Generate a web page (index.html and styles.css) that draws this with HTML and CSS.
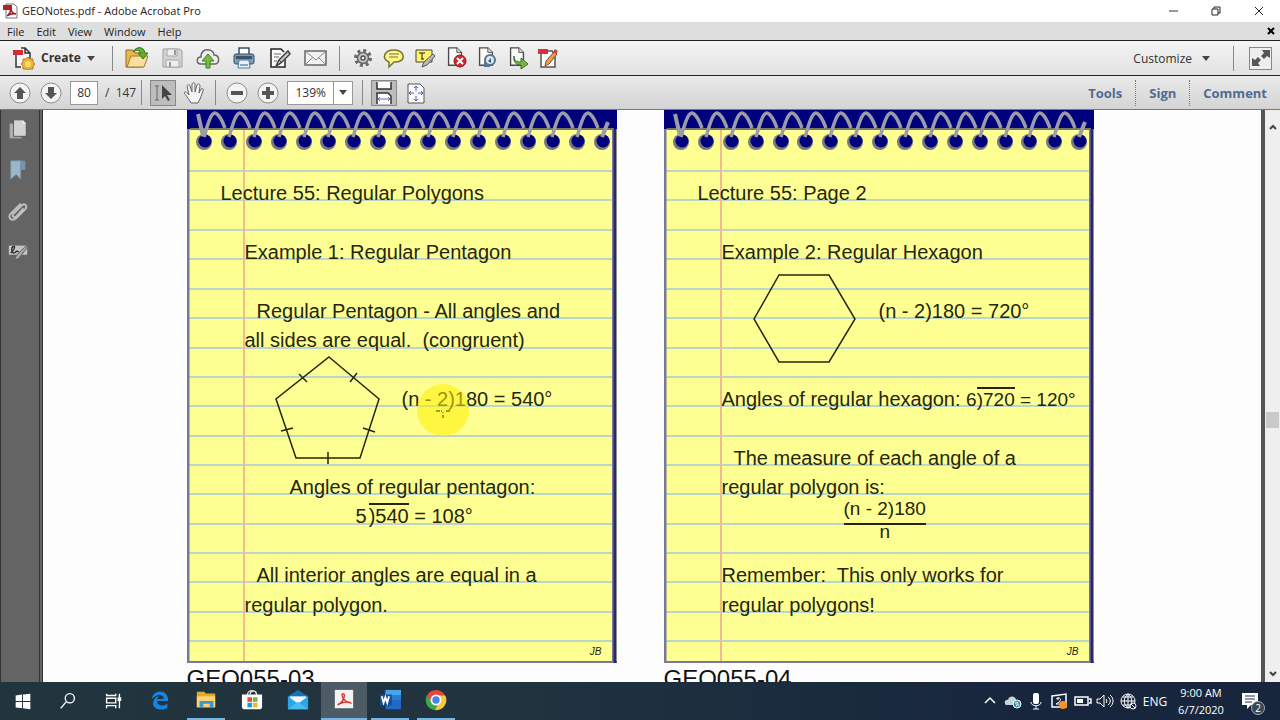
FILE: index.html
```html
<!DOCTYPE html>
<html lang="en">
<head>
<meta charset="utf-8">
<title>GEONotes.pdf - Adobe Acrobat Pro</title>
<link rel="stylesheet" href="styles.css">
</head>
<body>
<svg class="library" aria-hidden="true">
  <symbol id="page" viewBox="0 0 24 24"><path d="M5 2h9l5 5v14H5z" fill="#fbfbfb" stroke="#4b4b4b" stroke-width="1.5"/><path d="M14 2v5h5" fill="#ddd" stroke="#4b4b4b"/></symbol>
  <symbol id="hole" viewBox="0 0 18 18"><circle cx="9" cy="9" r="8" fill="#77777d"/><circle cx="10" cy="8" r="6.5" fill="#00007c"/></symbol>
  <symbol id="loop" viewBox="0 0 30 30"><path d="M3 27L6 17C10 4 13 1 16 4C20 7 22 13 24 18" fill="none" stroke="#9c9ca9" stroke-width="3.5"/></symbol>
  <symbol id="pad" viewBox="0 0 430 553">
    <path fill="#feff92" d="M0 0h430v553H0z"/>
    <path fill="#00007c" d="M0 0h430v19H0z"/>
    <path fill="#77776a" d="M3 18h424v2H3z"/>
    <path stroke="#b9d7c8" stroke-width="2" d="M2 61h425M2 90h425M2 120h425M2 149h425M2 179h425M2 208h425M2 238h425M2 267h425M2 296h425M2 326h425M2 355h425M2 384h425M2 414h425M2 443h425M2 472h425M2 502h425M2 531h425"/>
    <path stroke="#f0bc8c" stroke-width="2" d="M57 20v531"/>
    <path stroke="#78789a" stroke-width="3" d="M1 19v534"/>
    <path stroke="#7b789a" stroke-width="2" d="M0 552h430"/>
    <path stroke="#77779a" stroke-width="2" d="M426 20v532"/>
    <path stroke="#292771" stroke-width="3" d="M428 19v534"/>
    <g>
      <use href="#hole" x="8" y="23" width="18" height="18"/><use href="#hole" x="33" y="23" width="18" height="18"/><use href="#hole" x="58" y="23" width="18" height="18"/><use href="#hole" x="83" y="23" width="18" height="18"/><use href="#hole" x="108" y="23" width="18" height="18"/><use href="#hole" x="132" y="23" width="18" height="18"/><use href="#hole" x="157" y="23" width="18" height="18"/><use href="#hole" x="182" y="23" width="18" height="18"/><use href="#hole" x="207" y="23" width="18" height="18"/><use href="#hole" x="232" y="23" width="18" height="18"/><use href="#hole" x="257" y="23" width="18" height="18"/><use href="#hole" x="282" y="23" width="18" height="18"/><use href="#hole" x="307" y="23" width="18" height="18"/><use href="#hole" x="332" y="23" width="18" height="18"/><use href="#hole" x="356" y="23" width="18" height="18"/><use href="#hole" x="381" y="23" width="18" height="18"/><use href="#hole" x="406" y="23" width="18" height="18"/>
    </g>
    <g>
      <use href="#loop" x="14" y="0" width="30" height="30"/><use href="#loop" x="39" y="0" width="30" height="30"/><use href="#loop" x="64" y="0" width="30" height="30"/><use href="#loop" x="89" y="0" width="30" height="30"/><use href="#loop" x="114" y="0" width="30" height="30"/><use href="#loop" x="138" y="0" width="30" height="30"/><use href="#loop" x="163" y="0" width="30" height="30"/><use href="#loop" x="188" y="0" width="30" height="30"/><use href="#loop" x="213" y="0" width="30" height="30"/><use href="#loop" x="238" y="0" width="30" height="30"/><use href="#loop" x="263" y="0" width="30" height="30"/><use href="#loop" x="288" y="0" width="30" height="30"/><use href="#loop" x="313" y="0" width="30" height="30"/><use href="#loop" x="338" y="0" width="30" height="30"/><use href="#loop" x="362" y="0" width="30" height="30"/><use href="#loop" x="387" y="0" width="30" height="30"/>
      <path d="M11 4l5 22M421 12l-6 15" fill="none" stroke="#9c9ca9" stroke-width="4"/>
    </g>
  </symbol>
</svg>

<header class="titlebar">
  <svg class="app-icon" viewBox="0 0 16 16"><path d="M4 1h8l3 3v11H4z" fill="#fff" stroke="#777"/><path d="M1 2h9v5H1z" fill="#b5202b"/><path d="M5 13c4-3 4-6 4-9 0 5 2 7 5 7-4-1-6 0-9 2z" fill="none" stroke="#a81722" stroke-width="1.5"/></svg>
  <h1>GEONotes.pdf - Adobe Acrobat Pro</h1>
  <div class="window-buttons">
    <button aria-label="Minimize"><svg viewBox="0 0 12 12"><path d="M2 6h9" stroke="#333" fill="none"/></svg></button>
    <button aria-label="Restore"><svg viewBox="0 0 12 12"><path d="M2 4h6v6H2zM4 4V2h6v6H8" stroke="#222" fill="none"/></svg></button>
    <button aria-label="Close"><svg viewBox="0 0 12 12"><path d="M2 2l8 8M10 2l-8 8" stroke="#222" fill="none"/></svg></button>
  </div>
</header>

<nav class="menubar" aria-label="Menu">
  <button>File</button><button>Edit</button><button>View</button><button>Window</button><button>Help</button>
  <button class="close-doc" aria-label="Close document"><svg viewBox="0 0 8 8"><path d="M1 1l6 6M7 1L1 7" stroke="#000" stroke-width="2"/></svg></button>
</nav>

<div class="toolbar main-tools">
  <button class="create">
    <svg viewBox="0 0 24 24"><path d="M4 2h10l5 5v14H4z" fill="#f8f8f8"/><path d="M5 9v12h5M10 2h4l5 5v7M14 2v5h5" fill="none" stroke="#333" stroke-width="1.5"/><path d="M2 4h10v5H2z" fill="#d72b35"/><path d="M17 11l2 2 3 0 0 3 2 2-2 2 0 3-3 0-2 1-2-1-3 0 0-3-2-2 2-2 0-3 3 0z" fill="#efb437" stroke="#b47d20"/><circle cx="17" cy="18" r="3" fill="#ffd96c"/></svg>
    <span>Create</span><i class="caret"></i>
  </button>
  <i class="sep"></i>
  <div class="group wide">
    <button aria-label="Open"><svg viewBox="0 0 24 24"><path d="M2 7V4h7l2 3h8v14H2z" fill="#e9b84b" stroke="#8d6925"/><path d="M3 21l4-11h17l-4 11z" fill="#f7df9b" stroke="#a07a2c"/><path d="M9 6C12 0 20 0 21 7h3l-5 6-5-6h3c-1-3-5-3-8-1z" fill="#64ae2e" stroke="#397517"/></svg></button>
    <button aria-label="Save"><svg viewBox="0 0 24 24"><path d="M3 3h17l2 2v16H3z" fill="#d4d4d4" stroke="#a0a0a0"/><path d="M7 3h10v7H7zM6 14h13v7H6z" fill="#efefef" stroke="#a5a5a5"/><path d="M14 4h2v5h-2zM9 16h2v5H9z" fill="#999"/></svg></button>
    <button aria-label="Upload"><svg viewBox="0 0 24 24"><path d="M5 18C0 18 0 11 5 11 5 5 9 3 13 4c3 0 5 3 5 5 6 0 6 9 1 9z" fill="#eee" stroke="#666" stroke-width="1.5"/><path d="M12 8l6 7h-4v7h-4v-7H6z" fill="#79bd41" stroke="#3e7e20"/></svg></button>
    <button aria-label="Print"><svg viewBox="0 0 24 24"><path d="M7 9V2h10v7" fill="#fff" stroke="#35516a" stroke-width="1.5"/><rect x="2" y="8" width="20" height="10" rx="2" fill="#7f9bb3" stroke="#35516a"/><path d="M4 10h16v3H4z" fill="#3c556c"/><path d="M7 14h10l1 8H6z" fill="#e8f2f8" stroke="#55788f"/><path d="M8 19h8" stroke="#7cabc7" stroke-width="2"/></svg></button>
    <button aria-label="Edit"><svg viewBox="0 0 24 24"><path d="M17 13v8H3V3h10l3 3" fill="#fafafa" stroke="#222" stroke-width="1.5"/><path d="M6 8h7M6 11h5M6 15h3" stroke="#666"/><path d="M20 5l2 3-9 9-5 3 3-6z" fill="#ccc" stroke="#444" stroke-width="1.5"/><path d="M11 14l3 3" stroke="#333"/></svg></button>
    <button aria-label="Mail"><svg viewBox="0 0 24 24"><path d="M1 5h21v14H1z" fill="#f1f1f1" stroke="#666" stroke-width="1.5"/><path d="M1 5l11 9 10-9M1 19l8-8M22 19l-8-8" fill="none" stroke="#888"/></svg></button>
  </div>
  <i class="sep"></i>
  <div class="group tight">
    <button aria-label="Settings"><svg viewBox="0 0 24 24"><circle cx="12" cy="12" r="7.5" fill="none" stroke="#666" stroke-width="3" stroke-dasharray="3 2.89"/><circle cx="12" cy="12" r="5.5" fill="#c3c5c6" stroke="#666" stroke-width="1.5"/><circle cx="12" cy="12" r="2" fill="#eee" stroke="#555" stroke-width="1.5"/></svg></button>
    <button aria-label="Comment"><svg viewBox="0 0 24 24"><path d="M12 4c12 0 12 12 2 12h-2l-5 5v-5C-1 13 2 4 12 4z" fill="#fdf78a" stroke="#777338" stroke-width="1.5"/><path d="M7 8h10M7 11h9" stroke="#777338"/></svg></button>
    <button aria-label="Highlight"><svg viewBox="0 0 24 24"><path d="M3 4h16v12H3z" fill="#fff36b" stroke="#444"/><path d="M6 7h6M9 7v6M8 13h3" stroke="#222"/><path d="M20 8l2 2-8 9-5 2 2-5z" fill="#bbb" stroke="#555"/></svg></button>
    <button aria-label="Delete page"><svg viewBox="0 0 24 24"><use href="#page" width="22" height="22"/><circle cx="16" cy="15" r="6" fill="#cf292d" stroke="#8f161b"/><path d="M13 12l6 6M19 12l-6 6" stroke="#fff" stroke-width="2"/></svg></button>
    <button aria-label="Rotate page"><svg viewBox="0 0 24 24"><use href="#page" width="22" height="22"/><circle cx="15" cy="14" r="5" fill="#dde7ee" stroke="#55758e" stroke-width="2"/><path d="M13 15l3-3v5z" fill="#335f83"/><path d="M10 16v4h5" stroke="#557490" fill="none" stroke-width="2"/></svg></button>
    <button aria-label="Export page"><svg viewBox="0 0 24 24"><use href="#page" width="22" height="22"/><path d="M8 10c0 5 3 6 7 6v-4l7 6-7 5v-4c-5 0-8-3-7-9z" fill="#75b741" stroke="#376e20"/></svg></button>
    <button aria-label="Edit PDF"><svg viewBox="0 0 24 24"><path d="M4 5h11l3 4v12H4z" fill="#fff" stroke="#555" stroke-width="1.5"/><path d="M1 3h10v5H1z" fill="#dc3038"/><path d="M17 6l3 2-8 10-4 2 1-5z" fill="#e99d52" stroke="#82502b"/><path d="M18 3l3 2-2 3-3-2z" fill="#c34839"/></svg></button>
  </div>
  <div class="right-side">
    <button class="customize">Customize <i class="caret"></i></button>
    <i class="sep"></i>
    <button class="expand" aria-label="Full screen"><svg viewBox="0 0 22 22"><path d="M12 3h8v8l-3-2-3 3-3-3 3-3zM10 19H2v-8l3 2 3-3 3 3-3 3z" fill="#555"/></svg></button>
  </div>
</div>

<div class="toolbar page-tools">
  <div class="group arrows">
    <button aria-label="Previous page"><svg viewBox="0 0 24 24"><circle cx="12" cy="12" r="10" fill="#f4f4f4" stroke="#8c8c8c"/><path d="M12 6l6 6h-3v6H9v-6H6z" fill="#555"/></svg></button>
    <button aria-label="Next page"><svg viewBox="0 0 24 24"><circle cx="12" cy="12" r="10" fill="#f4f4f4" stroke="#8c8c8c"/><path d="M12 18l6-6h-3V6H9v6H6z" fill="#555"/></svg></button>
  </div>
  <label class="page-number"><input value="80" aria-label="Page number"><span>/&nbsp; 147</span></label>
  <i class="sep"></i>
  <div class="group pointer-tools">
    <button class="pressed" aria-label="Select"><svg viewBox="0 0 24 24"><path d="M4 5h4M6 5v14M4 19h4" stroke="#666" fill="none"/><path d="M11 4l10 10h-5l3 5-2 1-3-5-3 3z" fill="#444"/></svg></button>
    <button aria-label="Hand"><svg viewBox="0 0 24 24"><path d="M8 20C5 16 4 14 2 12c1-2 3-1 5 2L5 5c1-2 3-1 3 0l2 6V3c1-2 3-1 3 0v8l2-7c1-2 3-1 3 1l-1 7 2-4c2-1 3 0 2 2l-3 8-2 4H9z" fill="#f4f4f4" stroke="#666"/></svg></button>
  </div>
  <i class="sep"></i>
  <div class="group zoomers">
    <button aria-label="Zoom out"><svg viewBox="0 0 24 24"><circle cx="12" cy="12" r="10" fill="#f4f4f4" stroke="#8c8c8c"/><path d="M6 12h12" stroke="#555" stroke-width="4"/></svg></button>
    <button aria-label="Zoom in"><svg viewBox="0 0 24 24"><circle cx="12" cy="12" r="10" fill="#f4f4f4" stroke="#8c8c8c"/><path d="M6 12h12M12 6v12" stroke="#555" stroke-width="4"/></svg></button>
  </div>
  <div class="zoom-box"><input value="139%" aria-label="Zoom"><button aria-label="Zoom levels"><i class="caret"></i></button></div>
  <i class="sep"></i>
  <div class="group fits">
    <button class="pressed" aria-label="Scrolling pages"><svg viewBox="0 0 24 24"><path d="M5 1v7h14V1" fill="#fff" stroke="#333" stroke-width="1.5"/><path d="M5 23V12h11l3 3v8" fill="#fff" stroke="#333" stroke-width="1.5"/><path d="M6 18h12M8 16l-2 2 2 2M16 16l2 2-2 2" fill="none" stroke="#5b6ca8"/></svg></button>
    <button aria-label="Fit page"><svg viewBox="0 0 24 24"><path d="M4 3h12l4 4v15H4z" fill="#fafaff" stroke="#555"/><path d="M12 5v5M12 15v5M5 12h5M14 12h5M10 7l2-2 2 2M10 18l2 2 2-2M7 10l-2 2 2 2M17 10l2 2-2 2" fill="none" stroke="#5062a3"/></svg></button>
  </div>
  <nav class="panes" aria-label="Panes"><button>Tools</button><button>Sign</button><button>Comment</button></nav>
</div>

<div class="workspace">
  <aside class="sidebar">
    <button aria-label="Page thumbnails"><svg viewBox="0 0 24 24"><path d="M3 6h13v16H3z" fill="#b5b5b5" stroke="#888"/><path d="M7 2h10l4 4v14H7z" fill="#d3d3d3" stroke="#505050"/><path d="M17 2v4h4" fill="#eee"/></svg></button>
    <button aria-label="Bookmarks"><svg viewBox="0 0 24 24"><path d="M11 2h9v10h-5V6h-4z" fill="#7894ac"/><path d="M4 2h11v20l-5-5-6 5z" fill="#9db7ca" stroke="#728da3"/></svg></button>
    <button aria-label="Attachments"><svg viewBox="0 0 24 24"><path d="M18 9l-8 9c-2 2-5 0-3-3l9-9c3-3 7 0 4 4L10 20c-5 4-10-1-6-5L15 4" fill="none" stroke="#c0c0c0" stroke-width="2"/></svg></button>
    <button aria-label="Signatures"><svg viewBox="0 0 24 24"><path d="M2 5h20v10H2z" fill="#c4c4c4"/><path d="M4 13c3-2 6-8 3-7s-2 8 1 7l3-2 2 1" fill="none" stroke="#333" stroke-width="1.5"/><path d="M21 5l1 2-9 12-5 2 2-5z" fill="#aaa" stroke="#555"/></svg></button>
  </aside>
  <main class="document">
    <article class="leaf">
      <div class="sheet">
        <svg class="paper" viewBox="0 0 430 553"><use href="#pad"/>
          <g fill="none" stroke="#26260e" stroke-width="1.5"><path d="M142 247l50 42-19 59h-64l-20-59z"/><path d="M112 264l8 8M163 272l7-9M94 321l12-3M176 318l12 4M141 342v12"/></g>
        </svg>
        <div class="lines">
          <h2 class="r1">Lecture 55: Regular Polygons</h2>
          <p class="r3">Example 1: Regular Pentagon</p>
          <p class="r5 indent">Regular Pentagon - All angles and</p>
          <p class="r6">all sides are equal.&nbsp; (congruent)</p>
          <p class="r8 beside">(n - 2)180 = 540°</p>
          <p class="r11 middle">Angles of regular pentagon:</p>
          <p class="r12 division">5<span class="dividend">)540</span> = 108°</p>
          <p class="r14 indent">All interior angles are equal in a</p>
          <p class="r15">regular polygon.</p>
        </div>
        <small class="initials">JB</small>
        <svg class="cursor" viewBox="0 0 52 52"><circle cx="26" cy="26" r="26" fill="#ffef00" opacity=".55"/><path d="M19 27h4M24 27h1M29 27h4M26 28v1M26 31v3" stroke="#45450c"/></svg>
      </div>
      <p class="caption">GEO055-03</p>
    </article>
    <article class="leaf">
      <div class="sheet">
        <svg class="paper" viewBox="0 0 430 553"><use href="#pad"/><path d="M115 165h50l26 44-26 43h-50l-25-43z" fill="none" stroke="#26260e" stroke-width="1.5"/></svg>
        <div class="lines">
          <h2 class="r1">Lecture 55: Page 2</h2>
          <p class="r3">Example 2: Regular Hexagon</p>
          <p class="r5 beside">(n - 2)180 = 720°</p>
          <p class="r8">Angles of regular hexagon: <span class="compact">6<span class="dividend">)720</span> = 120°</span></p>
          <p class="r10 indent">The measure of each angle of a</p>
          <p class="r11">regular polygon is:</p>
          <p class="fraction"><span>(n - 2)180</span><span>n</span></p>
          <p class="r14">Remember:&nbsp; This only works for</p>
          <p class="r15">regular polygons!</p>
        </div>
        <small class="initials">JB</small>
      </div>
      <p class="caption">GEO055-04</p>
    </article>
  </main>
  <div class="scrollbar" aria-hidden="true">
    <svg viewBox="0 0 10 8"><path d="M2 6l3-3 3 3" fill="none" stroke="#444" stroke-width="2"/></svg>
    <i class="thumb"></i>
    <svg viewBox="0 0 10 8"><path d="M2 2l3 3 3-3" fill="none" stroke="#444" stroke-width="2"/></svg>
  </div>
</div>

<footer class="taskbar">
  <div class="system">
    <button aria-label="Start"><svg viewBox="0 0 24 24"><path d="M4 6l7-1v7H4zM12 5l8-1v8h-8zM4 13h7v7l-7-1zM12 13h8v8l-8-1z" fill="#fff"/></svg></button>
    <button aria-label="Search"><svg viewBox="0 0 24 24"><circle cx="14" cy="9" r="5" fill="none" stroke="#fff" stroke-width="1.5"/><path d="M10 13l-6 7" stroke="#fff" stroke-width="1.5"/></svg></button>
    <button aria-label="Task view"><svg viewBox="0 0 24 24"><path d="M5 4v2h10V4M5 20v-3h10v3M5 9h10v5H5zM19 4v16" fill="none" stroke="#fff" stroke-width="1.5"/><path d="M17 8h4v4h-4z" fill="#fff"/></svg></button>
  </div>
  <div class="apps">
    <button aria-label="Edge"><svg viewBox="0 0 24 24"><path d="M3 11C4 0 21-1 21 13H9c0 6 7 6 11 3v5C11 25 2 20 5 13c1-3 3-5 6-5-1 1-2 2-2 3h7c0-7-9-5-13 0z" fill="#1683df"/></svg></button>
    <button class="open" aria-label="File Explorer"><svg viewBox="0 0 24 24"><path d="M2 3h8l2 2h10v15H2z" fill="#e5a82f"/><path d="M2 8h20v12H2z" fill="#fad374"/><path d="M5 20v-7h15v7h-4v-4H9v4z" fill="#3b98cb"/></svg></button>
    <button aria-label="Store"><svg viewBox="0 0 24 24"><path d="M7 7c0-7 10-7 10 0M10 6c0-5 7-5 7 0" fill="none" stroke="#ddd" stroke-width="1.5"/><path d="M1 6h22v13c0 2-1 3-2 3H3c-1 0-2-1-2-3z" fill="#fff"/><path d="M7 9h5v5H7z" fill="#e7502c"/><path d="M13 9h5v5h-5z" fill="#78b633"/><path d="M7 15h5v5H7z" fill="#159dda"/><path d="M13 15h5v5h-5z" fill="#f4b826"/></svg></button>
    <button aria-label="Mail"><svg viewBox="0 0 24 24"><path d="M1 8l11-7 11 7v13H1z" fill="#1770ba"/><path d="M3 8h18v9H3z" fill="#eef8ff"/><path d="M1 8l11 8 11-8v14H1z" fill="#29a7e9"/><path d="M1 22l11-8 11 8z" fill="#49bdf0"/></svg></button>
    <button class="open active" aria-label="Acrobat"><svg viewBox="0 0 24 24"><path d="M2 1h20v20H2z" fill="#f5f1f0"/><path d="M6 17c6-3 8-12 5-12s0 9 8 10c-2-2-9 0-12 1-1 0-2 1-1 1z" fill="none" stroke="#d2302e" stroke-width="1.5"/></svg></button>
    <button class="open" aria-label="Word"><svg viewBox="0 0 24 24"><rect x="7" y="1" width="17" height="21" rx="1" fill="#2268c5"/><path d="M7 1h17v6H7z" fill="#47a5ee"/><path d="M7 7h17v5H7z" fill="#2b7cd3"/><rect x="1" y="6" width="13" height="12" rx="1" fill="#174c9d"/><path d="M3 8l2 7 2-6 2 6 2-7" fill="none" stroke="#fff" stroke-width="2"/></svg></button>
    <button class="open" aria-label="Chrome"><svg viewBox="0 0 24 24"><circle cx="12" cy="12" r="11" fill="#e9453a"/><path d="M2 7a11 11 0 0 0 9 16l5-9H7z" fill="#37a852"/><path d="M12 7h10a11 11 0 0 1-11 16l5-9z" fill="#fac63b"/><circle cx="12" cy="12" r="6" fill="#fff"/><circle cx="12" cy="12" r="4" fill="#4184ed"/></svg></button>
  </div>
  <div class="tray">
    <button aria-label="Hidden icons"><svg viewBox="0 0 20 20"><path d="M5 12l5-5 5 5" fill="none" stroke="#fff" stroke-width="1.5"/></svg></button>
    <button aria-label="OneDrive"><svg viewBox="0 0 20 20"><path d="M3 14c-3-3 0-6 2-5 1-5 8-4 8 0 4 0 4 5 1 5z" fill="#c8d1da"/><circle cx="14" cy="13" r="4" fill="#3e91ad" stroke="#fff"/><path d="M12 12h3l-1-1M16 14h-3l1 1" stroke="#fff" fill="none"/></svg></button>
    <button aria-label="Microphone"><svg viewBox="0 0 20 20"><rect x="7" y="2" width="6" height="11" rx="2" fill="#fff"/><path d="M5 11c0 5 10 5 10 0M10 15v3M7 18h6" stroke="#fff" fill="none"/></svg></button>
    <button aria-label="Updates"><svg viewBox="0 0 20 20"><path d="M3 5l14-2v13H3z" fill="none" stroke="#fff" stroke-width="1.5"/><path d="M7 8c4-3 6 1 3 3l-3 2h4M9 6v3" fill="none" stroke="#fff"/><circle cx="14" cy="14" r="4" fill="#f79222"/></svg></button>
    <button aria-label="Battery"><svg viewBox="0 0 20 20"><path d="M3 6h13v8H3zM17 8h2v4h-2" fill="none" stroke="#fff" stroke-width="1.5"/><path d="M5 8h6v4H5z" fill="#fff"/></svg></button>
    <button aria-label="Volume"><svg viewBox="0 0 20 20"><path d="M2 8h3l4-4v12l-4-4H2zM11 8c1 1 1 3 0 4M13 6c3 2 3 6 0 8M15 4c4 3 4 9 0 12" fill="none" stroke="#fff"/></svg></button>
    <button aria-label="Network"><svg viewBox="0 0 20 20"><circle cx="10" cy="10" r="7" fill="none" stroke="#fff"/><path d="M3 10h14M10 3v14M5 6h10M5 14h10M10 3c-5 4-5 10 0 14M10 3c5 4 5 10 0 14" fill="none" stroke="#fff"/><circle cx="15" cy="15" r="3" fill="#17263c" stroke="#fff"/><path d="M13 13l4 4" stroke="#fff"/></svg></button>
    <button class="language">ENG</button>
    <button class="clock"><span>9:00 AM</span><span>6/7/2020</span></button>
    <button class="notices" aria-label="Notifications"><svg viewBox="0 0 20 20"><path d="M1 2h16v12h-7l-4 4v-4H1z" fill="#fff"/><path d="M4 5h10M4 8h10M4 11h7" stroke="#26354a"/></svg><span>2</span></button>
  </div>
</footer>
</body>
</html>
```

FILE: styles.css
```css
* { box-sizing: border-box; }
body {
  margin: 0;
  height: 100vh;
  display: flex;
  flex-direction: column;
  overflow: hidden;
  font-family: "Open Sans", "Noto Sans", sans-serif;
  font-size: 12px;
  color: #333;
  background: #fff;
}
h1, h2, p { margin: 0; font-weight: 400; }
button {
  border: 0;
  padding: 0;
  background: none;
  font: inherit;
  color: inherit;
  display: flex;
  align-items: center;
  justify-content: center;
}
input { font: inherit; color: #333; }
svg { display: block; flex: none; }
.library { position: absolute; width: 0; height: 0; }

.titlebar { display: flex; align-items: center; height: 22px; padding: 0 0 0 2px; gap: 4px; flex: none; }
.app-icon { width: 16px; height: 16px; }
.titlebar h1 { font-size: 11px; line-height: 22px; color: #222; }
.window-buttons { margin-left: auto; display: flex; }
.window-buttons button { width: 43px; height: 20px; }
.window-buttons svg { width: 12px; height: 12px; }

.menubar { display: flex; align-items: center; gap: 12px; height: 18px; padding: 0 5px 0 7px; background: #dedede; flex: none; color: #222; font-size: 11px; }
.menubar .close-doc { margin-left: auto; }
.close-doc svg { width: 8px; height: 8px; }

.toolbar { display: flex; align-items: center; height: 35px; flex: none; border-top: 1px solid #222; background: linear-gradient(#f4f4f4, #e2e2e2); }
.page-tools { background: linear-gradient(#eaeaea, #d4d4d4); border-bottom: 1px solid #777; }
.toolbar svg { width: 24px; height: 24px; }
.group { display: flex; align-items: center; }
.group button { width: 24px; height: 24px; }
.sep { width: 1px; height: 25px; background: #888; flex: none; }
.caret { border: 4px solid transparent; border-top: 5px solid #444; border-bottom: 0; flex: none; }
.create { padding: 0 17px 0 11px; gap: 6px; font-weight: 700; font-size: 12px; }
.create span { line-height: 20px; }
.wide { gap: 12px; padding: 0 11px; }
.tight { gap: 7px; padding: 0 11px; }
.right-side { display: flex; align-items: center; margin-left: auto; padding-right: 8px; }
.customize { gap: 10px; padding-right: 23px; }
.expand { width: 23px; height: 23px; margin-left: 15px; border: 1px solid #888; background: #eee; }
.toolbar .expand svg { width: 22px; height: 22px; }

.arrows { gap: 7px; padding: 0 7px 0 8px; }
.page-number { display: flex; align-items: center; gap: 7px; padding-right: 5px; }
.page-number input { width: 28px; height: 24px; padding: 0; text-align: center; border: 1px solid #999; background: #fff; }
.pointer-tools { gap: 7px; padding: 0 9px; }
.group .pressed { background: #bdbdbd; outline: 1px solid #888; }
.zoomers { gap: 7px; padding: 0 7px 0 9px; }
.zoom-box { display: flex; height: 24px; border: 1px solid #999; background: #fff; margin-right: 9px; }
.zoom-box input { width: 45px; padding: 0; text-align: center; border: 0; background: none; }
.zoom-box button { width: 19px; border-left: 1px solid #999; }
.fits { gap: 8px; padding: 0 9px; }
.panes { display: flex; margin-left: auto; font-size: 13px; font-weight: 700; color: #506b91; }
.panes button { height: 26px; padding: 0 13px; }
.panes button + button { border-left: 1px dotted #777; }

.workspace { display: flex; flex: 1; min-height: 0; }
.sidebar { display: flex; flex-direction: column; align-items: center; gap: 17px; width: 43px; padding: 7px 4px 0 0; background: #646464; border-left: 1px solid #333; border-right: 4px double #333; flex: none; }
.sidebar svg { width: 22px; height: 24px; }
.document { display: flex; justify-content: center; gap: 47px; flex: 1; min-width: 0; overflow: hidden; padding-right: 24px; background: #fdfdfd; border-right: 4px solid #555; }
.leaf { width: 430px; flex: none; }
.sheet { position: relative; display: grid; font-family: "Liberation Sans", Arial, sans-serif; color: #26260e; }
.sheet > * { grid-area: 1 / 1; }
.paper { width: 100%; height: auto; }
.lines { display: grid; grid-template-rows: repeat(15, minmax(0, 1fr)); padding: 69px 0 43px 58px; line-height: 29px; white-space: nowrap; }
.lines > * { font-size: 20px; min-height: 0; }
.lines h2 { margin-left: -24px; }
.r1 { grid-row: 1; } .r3 { grid-row: 3; } .r5 { grid-row: 5; } .r6 { grid-row: 6; }
.r8 { grid-row: 8; } .r10 { grid-row: 10; } .r11 { grid-row: 11; } .r12 { grid-row: 12; }
.r14 { grid-row: 14; } .r15 { grid-row: 15; }
.indent { padding-left: 12px; }
.beside { padding-left: 157px; }
.middle { padding-left: 45px; }
.division { padding-left: 111px; }
.dividend { border-top: 2px solid #26260e; margin-left: 2px; }
.compact { font-size: 19px; line-height: 20px; }
.compact .dividend { margin-left: 0; }
.lines .fraction { grid-row: 12 / span 2; display: flex; flex-direction: column; align-self: start; justify-self: start; margin-left: 122px; text-align: center; line-height: 14px; font-size: 19px; }
.fraction span { padding-bottom: 7px; }
.fraction span + span { border-top: 2px solid #26260e; padding: 0; }
.initials { align-self: end; justify-self: end; padding: 0 15px 5px 0; font-size: 10px; line-height: 12px; font-style: italic; }
.cursor { position: absolute; left: 230px; top: 274px; width: 52px; height: 52px; }
.caption { padding-top: 2px; font-family: "Liberation Sans", Arial, sans-serif; font-size: 24px; line-height: 28px; color: #111; }

.scrollbar { display: flex; flex-direction: column; align-items: center; width: 15px; padding: 13px 0 4px; background: #efefef; flex: none; }
.scrollbar svg { width: 10px; height: 8px; }
.thumb { width: 13px; height: 16px; background: #c9c9c9; margin: 281px 0 auto; }

.taskbar { display: flex; height: 38px; flex: none; background: linear-gradient(90deg, #22353e, #20333f 40%, #17263d 80%); color: #fff; }
.system, .apps, .tray { display: flex; }
.system button { width: 45px; }
.apps { padding-left: 2px; }
.apps button { width: 46px; border-bottom: 2px solid transparent; }
.taskbar svg { width: 22px; height: 22px; }
.apps .open { width: 38px; margin: 0 4px; border-bottom-color: #76b5e8; }
.apps .active { width: 46px; margin: 0; background: #4c5b64; }
.tray { margin-left: auto; padding-right: 15px; }
.tray button { width: 23px; }
.tray button svg { width: 20px; height: 20px; }
.tray .language { width: 32px; }
.tray .clock { width: 60px; flex-direction: column; line-height: 17px; font-size: 11px; }
.tray .notices { position: relative; width: 28px; margin-left: 6px; }
.notices span { position: absolute; right: 0; bottom: 5px; width: 14px; height: 14px; border: 1px solid #aaa; border-radius: 50%; background: #3a4655; font-size: 10px; line-height: 12px; text-align: center; }
```
